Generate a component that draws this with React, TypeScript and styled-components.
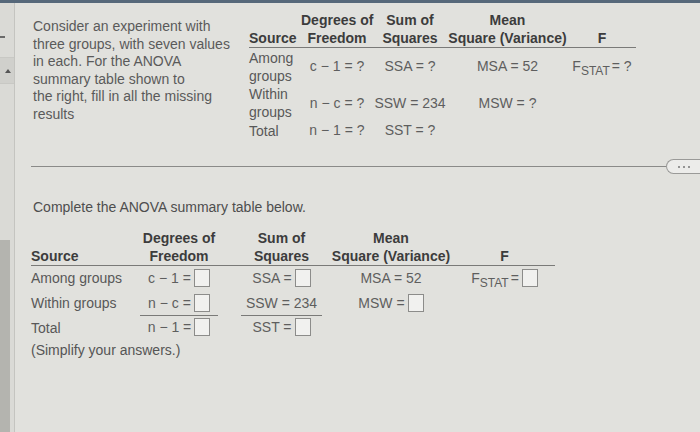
import React from 'react'
import styled, { createGlobalStyle } from 'styled-components'

const GlobalStyle = createGlobalStyle`
  html, body {
    margin: 0;
    padding: 0;
  }
  body {
    background: #e1e1dd;
    font-family: 'Liberation Sans', Arial, sans-serif;
    color: #585858;
    overflow: hidden;
  }
`

const Screen = styled.div`
  width: 700px;
  height: 432px;
  display: flex;
  flex-direction: column;
  overflow: hidden;
`

const TopBar = styled.div`
  height: 3px;
  background: #56687a;
`

const Body = styled.div`
  flex: 1;
  display: flex;
  min-height: 0;
`

const Sidebar = styled.aside`
  width: 14px;
  flex-shrink: 0;
  border-right: 1px solid #c4c4c0;
  background: #dadad6;
  display: flex;
  flex-direction: column;
`

const Dash = styled.div`
  width: 5px;
  height: 2px;
  margin-top: 33px;
  background: #6a6a6a;
`

const ArrowTab = styled.div`
  height: 25px;
  margin-top: 19px;
  background: #d0d0cc;
  border-top: 1px solid #c8c8c4;
  border-bottom: 1px solid #c8c8c4;
  display: flex;
  align-items: center;
  justify-content: flex-end;
  padding-right: 3px;
`

const Triangle = styled.div`
  width: 0;
  height: 0;
  border-left: 3px solid transparent;
  border-right: 3px solid transparent;
  border-bottom: 4px solid #555;
`

const SideFill = styled.div`
  height: 156px;
`

const SideDark = styled.div`
  flex: 1;
  width: 10px;
  background: #b4b4af;
`

const Main = styled.main`
  flex: 1;
  padding-left: 18px;
  display: flex;
  flex-direction: column;
  min-width: 0;
`

const TopSection = styled.section`
  height: 156px;
  padding-top: 8px;
  box-sizing: border-box;
  display: flex;
`

const Intro = styled.p`
  margin: 7px 0 0;
  width: 216px;
  flex-shrink: 0;
  font-size: 14px;
  line-height: 17.5px;
  color: #5a5a5a;
`

const Table = styled.div<{ $shift?: number }>`
  display: flex;
  flex-direction: column;
  align-self: flex-start;
  margin-left: ${p => p.$shift ?? 0}px;
`

const Row = styled.div<{ $cols: string; $rule?: boolean; $h?: number }>`
  display: grid;
  grid-template-columns: ${p => p.$cols};
  align-items: center;
  min-height: ${p => (p.$h ? `${p.$h}px` : 'auto')};
  border-bottom: ${p => (p.$rule ? '1px solid #7a7a78' : 'none')};
`

const Head = styled.div<{ $left?: boolean; $nudge?: number }>`
  font-size: 14px;
  line-height: 18px;
  font-weight: bold;
  color: #3c3c3c;
  text-align: ${p => (p.$left ? 'left' : 'center')};
  padding-right: ${p => p.$nudge ?? 0}px;
  white-space: nowrap;
`

const Label = styled.div`
  font-size: 14px;
  line-height: 18px;
  color: #585858;
  white-space: nowrap;
`

const Value = styled.div<{ $rule?: boolean; $nudge?: number }>`
  font-size: 14px;
  line-height: 18px;
  color: #5e5e5e;
  text-align: center;
  white-space: nowrap;
  align-self: stretch;
  display: flex;
  align-items: center;
  justify-content: center;
  padding-right: ${p => p.$nudge ?? 0}px;
  border-bottom: ${p => (p.$rule ? '1px solid #7a7a78' : '1px solid transparent')};
`

const Sub = styled.span`
  font-size: 12px;
  position: relative;
  top: 5px;
  margin-right: 2px;
`

const Box = styled.span`
  display: inline-block;
  width: 16px;
  height: 18px;
  margin-left: 3px;
  border: 1px solid #8c8c8a;
  background: #f1f1ef;
  box-sizing: border-box;
`

const Divider = styled.div`
  height: 15px;
  margin-left: -2px;
  display: flex;
  align-items: center;
`

const Rule = styled.div`
  flex: 1;
  height: 1px;
  background: #8a8a88;
`

const MorePill = styled.div`
  width: 33px;
  height: 13px;
  border: 1px solid #9a9a98;
  border-right: none;
  border-radius: 8px 0 0 8px;
  background: #ececea;
  display: flex;
  align-items: center;
  justify-content: center;
  gap: 3px;
`

const Dot = styled.span`
  width: 2px;
  height: 2px;
  border-radius: 50%;
  background: #777;
`

const Prompt = styled.p`
  margin: 25px 0 12px;
  font-size: 14px;
  line-height: 17.5px;
  color: #4e4e4e;
`

const Note = styled.p`
  margin: 2px 0 0 -2px;
  font-size: 14px;
  line-height: 17px;
  color: #555;
`

const topCols = '52px 72px 74px 121px 68px'
const botCols = '109px 78px 23px 81px 138px 95px'

const FStat: React.FC<{ children: React.ReactNode }> = ({ children }) => (
  <>
    F<Sub>STAT</Sub>
    {children}
  </>
)

const App: React.FC = () => {
  return (
    <Screen>
      <GlobalStyle />
      <TopBar />
      <Body>
        <Sidebar>
          <Dash />
          <ArrowTab>
            <Triangle />
          </ArrowTab>
          <SideFill />
          <SideDark />
        </Sidebar>
        <Main>
          <TopSection>
            <Intro>
              Consider an experiment with
              <br />
              three groups, with seven values
              <br />
              in each. For the ANOVA
              <br />
              summary table shown to
              <br />
              the right, fill in all the missing
              <br />
              results
            </Intro>
            <Table>
              <Row $cols={topCols}>
                <Head />
                <Head>Degrees of</Head>
                <Head>Sum of</Head>
                <Head>Mean</Head>
                <Head />
              </Row>
              <Row $cols={topCols} $rule>
                <Head $left>Source</Head>
                <Head>Freedom</Head>
                <Head>Squares</Head>
                <Head>Square (Variance)</Head>
                <Head>F</Head>
              </Row>
              <Row $cols={topCols} $h={37}>
                <Label>
                  Among
                  <br />
                  groups
                </Label>
                <Value>c − 1 = ?</Value>
                <Value>SSA = ?</Value>
                <Value>MSA = 52</Value>
                <Value>
                  <FStat> = ?</FStat>
                </Value>
              </Row>
              <Row $cols={topCols} $h={35}>
                <Label>
                  Within
                  <br />
                  groups
                </Label>
                <Value>n − c = ?</Value>
                <Value>SSW = 234</Value>
                <Value>MSW = ?</Value>
                <Value />
              </Row>
              <Row $cols={topCols} $h={16}>
                <Label>Total</Label>
                <Value>n − 1 = ?</Value>
                <Value>SST = ?</Value>
                <Value />
                <Value />
              </Row>
            </Table>
          </TopSection>

          <Divider>
            <Rule />
            <MorePill>
              <Dot />
              <Dot />
              <Dot />
            </MorePill>
          </Divider>

          <Prompt>Complete the ANOVA summary table below.</Prompt>

          <Table $shift={-2}>
            <Row $cols={botCols}>
              <Head />
              <Head>Degrees of</Head>
              <Head />
              <Head>Sum of</Head>
              <Head>Mean</Head>
              <Head />
            </Row>
            <Row $cols={botCols} $rule>
              <Head $left>Source</Head>
              <Head>Freedom</Head>
              <Head />
              <Head>Squares</Head>
              <Head>Square (Variance)</Head>
              <Head $nudge={6}>F</Head>
            </Row>
            <Row $cols={botCols} $h={25}>
              <Label>Among groups</Label>
              <Value>
                c − 1 =<Box />
              </Value>
              <Value />
              <Value>
                SSA =<Box />
              </Value>
              <Value>MSA = 52</Value>
              <Value $nudge={6}>
                <FStat>
                  =<Box />
                </FStat>
              </Value>
            </Row>
            <Row $cols={botCols} $h={25}>
              <Label>Within groups</Label>
              <Value $rule>
                n − c =<Box />
              </Value>
              <Value />
              <Value $rule>SSW = 234</Value>
              <Value>
                MSW =<Box />
              </Value>
              <Value />
            </Row>
            <Row $cols={botCols} $h={24}>
              <Label>Total</Label>
              <Value>
                n − 1 =<Box />
              </Value>
              <Value />
              <Value>
                SST =<Box />
              </Value>
              <Value />
              <Value />
            </Row>
          </Table>
          <Note>(Simplify your answers.)</Note>
        </Main>
      </Body>
    </Screen>
  )
}

export default App
